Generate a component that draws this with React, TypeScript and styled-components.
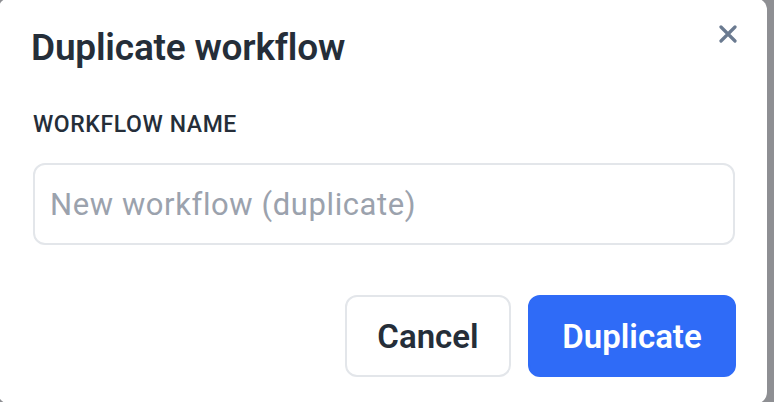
import React from 'react';
import styled, {createGlobalStyle} from 'styled-components';

const GlobalStyle = createGlobalStyle`
  html, body {
    margin: 0;
    padding: 0;
    background: #8e8f93;
    overflow: hidden;
  }

  * {
    box-sizing: border-box;
  }
`;

const Page = styled.div`
  width: 774px;
  height: 402px;
  overflow: hidden;
`;

const Dialog = styled.div`
  display: flex;
  flex-direction: column;

  width: 769px;
  height: 406px;
  margin: -2px 0 0 -2px;
  padding: 26px 32px 0 35px;

  background: #fff;
  border-radius: 12px;

  font-family: Roboto, "Liberation Sans", sans-serif;
  color: #252e39;
`;

const Header = styled.div`
  display: flex;
  justify-content: space-between;
  align-items: flex-start;
`;

const Title = styled.h2`
  margin: 0 0 0 -2px;

  font-size: 37px;
  font-weight: 600;
  line-height: 48px;
  letter-spacing: -0.2px;
`;

const CloseButton = styled.button`
  display: flex;
  margin: 1px -2px 0 0;
  padding: 0;

  background: none;
  border: none;
  color: #6a7a90;
  cursor: pointer;
`;

const Label = styled.label`
  display: block;
  margin-top: 39px;

  font-size: 23px;
  font-weight: 500;
  line-height: 28px;
  letter-spacing: 0.6px;
`;

const Input = styled.input`
  width: 702px;
  height: 82px;
  margin-top: 24px;
  padding: 0 15px;

  border: 2px solid #e3e6ea;
  border-radius: 12px;
  outline: none;

  font-family: inherit;
  font-size: 31px;
  letter-spacing: 0.6px;
  color: #252e39;

  &::placeholder {
    color: #9ba2ad;
  }
`;

const Footer = styled.div`
  display: flex;
  justify-content: flex-end;
  gap: 17px;

  margin: 50px -1px 0 0;
`;

const Button = styled.button<{$primary?: boolean; $width: number}>`
  width: ${p => p.$width}px;
  height: 82px;
  padding: 0;

  background: ${p => (p.$primary ? '#2f6bf7' : '#fff')};
  border: 2px solid ${p => (p.$primary ? '#2f6bf7' : '#e3e6ea')};
  border-radius: 12px;

  font-family: inherit;
  font-size: 33px;
  font-weight: 600;
  color: ${p => (p.$primary ? '#fff' : '#252e39')};

  cursor: pointer;
`;

const CloseIcon = () => (
    <svg width="18" height="18" viewBox="0 0 18 18" fill="none">
        <path d="M2 2L16 16M16 2L2 16" stroke="currentColor" strokeWidth="3.2" strokeLinecap="round"/>
    </svg>
);

export default function App() {
    return (
        <Page>
            <GlobalStyle/>
            <Dialog>
                <Header>
                    <Title>Duplicate workflow</Title>
                    <CloseButton aria-label="Close"><CloseIcon/></CloseButton>
                </Header>
                <Label htmlFor="workflow-name">WORKFLOW NAME</Label>
                <Input id="workflow-name" placeholder="New workflow (duplicate)"/>
                <Footer>
                    <Button $width={166}>Cancel</Button>
                    <Button $primary $width={208}>Duplicate</Button>
                </Footer>
            </Dialog>
        </Page>
    );
}
